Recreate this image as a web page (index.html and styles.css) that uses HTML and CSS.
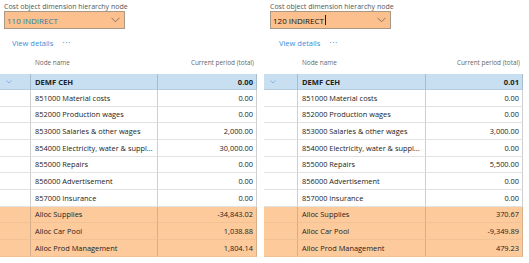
FILE: index.html
```html
<!DOCTYPE html>
<html lang="en">
<head>
  <meta charset="UTF-8" />
  <title>Cost object hierarchy</title>
  <link rel="stylesheet" href="styles.css">
</head>
<body>
  <div class="page">
    <!-- Left panel -->
    <section class="panel panel-left">
      <div class="field-label">Cost object dimension hierarchy node</div>
      <div class="dropdown">
        <span class="dropdown-value teal">110 INDIRECT</span>
        <svg class="chevron" width="9" height="6" viewBox="0 0 9 6"><path d="M0.5 0.8 L4.5 4.8 L8.5 0.8" fill="none" stroke="#7a6a5c" stroke-width="0.9"/></svg>
      </div>
      <div class="actions">
        <span class="link">View details</span>
        <span class="more">&middot;&middot;&middot;</span>
      </div>
      <div class="grid">
        <div class="head"></div><div class="head">Node name</div><div class="head num">Current period (total)</div>
      </div>
      <div class="grid rows">
        <div class="cell parent first"><svg width="6" height="4" viewBox="0 0 6 4"><path d="M0.5 0.5 L3 3 L5.5 0.5" fill="none" stroke="#7fb0dc" stroke-width="0.9"/></svg></div>
        <div class="cell parent bold">DEMF CEH</div>
        <div class="cell parent bold num">0.00</div>

        <div class="cell first"></div><div class="cell">851000 Material costs</div><div class="cell num">0.00</div>
        <div class="cell first"></div><div class="cell">852000 Production wages</div><div class="cell num">0.00</div>
        <div class="cell first"></div><div class="cell">853000 Salaries &amp; other wages</div><div class="cell num">2,000.00</div>
        <div class="cell first"></div><div class="cell">854000 Electricity, water &amp; suppl...</div><div class="cell num">30,000.00</div>
        <div class="cell first"></div><div class="cell">855000 Repairs</div><div class="cell num">0.00</div>
        <div class="cell first"></div><div class="cell">856000 Advertisement</div><div class="cell num">0.00</div>
        <div class="cell first"></div><div class="cell">857000 Insurance</div><div class="cell num">0.00</div>

        <div class="cell alloc first"></div><div class="cell alloc">Alloc Supplies</div><div class="cell alloc num">-34,843.02</div>
        <div class="cell alloc first"></div><div class="cell alloc">Alloc Car Pool</div><div class="cell alloc num">1,038.88</div>
        <div class="cell alloc first"></div><div class="cell alloc">Alloc Prod Management</div><div class="cell alloc num">1,804.14</div>
      </div>
    </section>

    <!-- Right panel -->
    <section class="panel panel-right">
      <div class="field-label">Cost object dimension hierarchy node</div>
      <div class="dropdown">
        <span class="dropdown-value">120 INDIRECT<span class="caret"></span></span>
        <svg class="chevron" width="9" height="6" viewBox="0 0 9 6"><path d="M0.5 0.8 L4.5 4.8 L8.5 0.8" fill="none" stroke="#7a6a5c" stroke-width="0.9"/></svg>
      </div>
      <div class="actions">
        <span class="link">View details</span>
        <span class="more">&middot;&middot;&middot;</span>
      </div>
      <div class="grid">
        <div class="head"></div><div class="head">Node name</div><div class="head num">Current period (total)</div>
      </div>
      <div class="grid rows">
        <div class="cell parent first"><svg width="6" height="4" viewBox="0 0 6 4"><path d="M0.5 0.5 L3 3 L5.5 0.5" fill="none" stroke="#7fb0dc" stroke-width="0.9"/></svg></div>
        <div class="cell parent bold">DEMF CEH</div>
        <div class="cell parent bold num">0.01</div>

        <div class="cell first"></div><div class="cell">851000 Material costs</div><div class="cell num">0.00</div>
        <div class="cell first"></div><div class="cell">852000 Production wages</div><div class="cell num">0.00</div>
        <div class="cell first"></div><div class="cell">853000 Salaries &amp; other wages</div><div class="cell num">3,000.00</div>
        <div class="cell first"></div><div class="cell">854000 Electricity, water &amp; suppl...</div><div class="cell num">0.00</div>
        <div class="cell first"></div><div class="cell">855000 Repairs</div><div class="cell num">5,500.00</div>
        <div class="cell first"></div><div class="cell">856000 Advertisement</div><div class="cell num">0.00</div>
        <div class="cell first"></div><div class="cell">857000 Insurance</div><div class="cell num">0.00</div>

        <div class="cell alloc first"></div><div class="cell alloc">Alloc Supplies</div><div class="cell alloc num">370.67</div>
        <div class="cell alloc first"></div><div class="cell alloc">Alloc Car Pool</div><div class="cell alloc num">-9,349.89</div>
        <div class="cell alloc first"></div><div class="cell alloc">Alloc Prod Management</div><div class="cell alloc num">479.23</div>
      </div>
    </section>
  </div>
</body>
</html>
```

FILE: styles.css
```css
/* Global */
* {
  margin: 0;
  padding: 0;
  box-sizing: border-box;
}
body {
  font-family: 'Open Sans', 'Noto Sans', sans-serif;
  color: #222;
  background: #fff;
}
.page {
  display: flex;
  width: 529px;
  height: 263px;
  overflow: hidden;
}

/* Panels */
.panel {
  padding-top: 2px;
}
.panel-left {
  width: 264px;
  --pad: 4px;
  --link-pad: 12px;
}
.panel-right {
  width: 265px;
  --pad: 6px;
  --link-pad: 15px;
}
.panel-left .grid {
  grid-template-columns: 31px 127px 99px;
}
.panel-right .grid {
  grid-template-columns: 34px 128px 97px;
}

/* Dropdown field */
.field-label {
  margin-left: var(--pad);
  font-size: 7px;
  line-height: 9px;
  color: #555;
}
.dropdown {
  margin-left: var(--pad);
  width: 121px;
  height: 18px;
  border: 1px solid #a89886;
  background: #fcc08e;
  display: flex;
  align-items: center;
  justify-content: space-between;
  padding: 0 4px 0 2px;
}
.dropdown-value {
  font-size: 8px;
  color: #111;
  display: flex;
  align-items: center;
}
.dropdown-value.teal {
  color: #2a7ea5;
}
.caret {
  display: inline-block;
  width: 1px;
  height: 10px;
  background: #222;
  margin-left: 1px;
}

/* Actions */
.actions {
  margin-top: 7px;
  padding-left: var(--link-pad);
  height: 13px;
  display: flex;
  align-items: center;
  gap: 9px;
  font-size: 7.5px;
  color: #3a8ed8;
}
.more {
  letter-spacing: 0.5px;
  font-size: 9px;
}

/* Table */
.grid {
  display: grid;
}
.head {
  margin-top: 7px;
  margin-bottom: 4px;
  height: 14px;
  line-height: 14px;
  font-size: 6.4px;
  color: #666;
  padding-left: 4px;
}
.head.num {
  text-align: right;
  padding-right: 3px;
}
.cell {
  height: 16.67px;
  display: flex;
  align-items: center;
  padding-left: 4px;
  font-size: 7.4px;
  color: #222;
  border-bottom: 1px solid #e2e2e2;
  border-right: 1px solid #cfcfcf;
  white-space: nowrap;
  overflow: hidden;
}
.cell.first {
  padding-left: 6px;
}
.cell.num {
  justify-content: flex-end;
  padding-right: 3px;
}
.cell.parent {
  height: 16px;
  background: #c8dff2;
  border-right-color: #a9bccc;
  border-bottom-color: #b9cde0;
}
.cell.bold {
  font-weight: 700;
  font-size: 7.6px;
}
.cell.alloc {
  background: #fdca9c;
  border-right-color: #d5ae8c;
  border-bottom-color: #f2c196;
}
```
